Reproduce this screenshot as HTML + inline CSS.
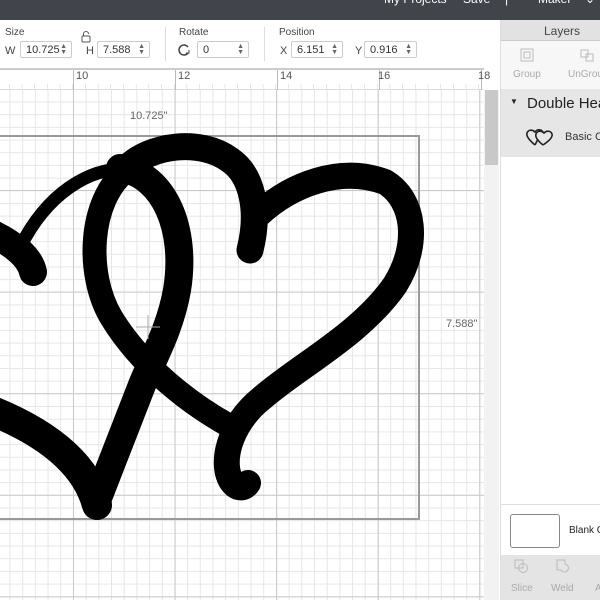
<!DOCTYPE html>
<html><head><style>
*{margin:0;padding:0;box-sizing:border-box}
body{width:600px;height:600px;overflow:hidden;position:relative;background:#fff;font-family:"Liberation Sans",sans-serif;color:#333}
.a{position:absolute}
.top{left:0;top:0;width:600px;height:20px;background:#414549;color:#fff;font-size:12px;overflow:hidden}
.tb{left:0;top:20px;width:500px;height:48px;background:#fff}
.lbl{font-size:10px;color:#444}
.box{height:17px;border:1px solid #ccc;border-radius:2px;font-size:11px;padding:2px 5px;color:#333;background:#fff}
.sp{position:absolute;right:4px;top:2px;font-size:7px;line-height:6px;color:#666}
.sep{width:1px;height:34px;background:#ddd;top:27px}
.ruler{left:0;top:68px;width:484px;height:22px;background:#fff;border-top:2px solid #ccc;border-bottom:1px solid #ddd;
 background-image:repeating-linear-gradient(90deg,transparent 0 12px,#ccc 12px 13px);background-size:12.7px 8px;background-repeat:repeat-x;background-position:9.5px 14px}
.rl{font-size:11px;color:#555;top:70px}
.canvas{left:0;top:90px;width:484px;height:510px;background-color:#fff;
 background-image:linear-gradient(90deg,#c9c9c9 1px,transparent 1px),linear-gradient(#c9c9c9 1px,transparent 1px),linear-gradient(90deg,#e6e6e6 1px,transparent 1px),linear-gradient(#e6e6e6 1px,transparent 1px);
 background-size:101.6px 101.6px,101.6px 101.6px,12.7px 12.7px,12.7px 12.7px;
 background-position:73px 100px,73px 100px,9.5px 11.5px,9.5px 11.5px}
.panel{left:500px;top:20px;width:100px;height:580px;background:#fff;border-left:1px solid #ddd;overflow:hidden}
</style></head><body>
<div class="a top"><span class="a" style="left:384px;top:-8px">My Projects</span><span class="a" style="left:463px;top:-8px">Save</span><span class="a" style="left:505px;top:-8px">|</span><span class="a" style="left:538px;top:-8px">Maker</span><span class="a" style="left:585px;top:-8px">⌄</span></div>
<div class="a tb"></div>
<div class="a lbl" style="left:5px;top:27px">Size</div>
<div class="a lbl" style="left:5px;top:45px;font-size:11px">W</div>
<div class="a box" style="left:20px;top:41px;width:52px">10.725<span class="sp">▲<br>▼</span></div>
<svg class="a" style="left:79px;top:30px" width="14" height="14"><rect x="3" y="6" width="8" height="6" rx="1" fill="none" stroke="#555"/><path d="M4.5 6V4a2.5 2.5 0 0 1 5 0" fill="none" stroke="#555"/></svg>
<div class="a lbl" style="left:86px;top:45px;font-size:11px">H</div>
<div class="a box" style="left:97px;top:41px;width:53px">7.588<span class="sp">▲<br>▼</span></div>
<div class="a sep" style="left:165px"></div>
<div class="a lbl" style="left:179px;top:27px">Rotate</div>
<svg class="a" style="left:178px;top:43px" width="14" height="14"><path d="M10 10A5 5 0 1 1 10 4" fill="none" stroke="#444" stroke-width="1.5"/><path d="M8 10h3v-3" fill="none" stroke="#444"/></svg>
<div class="a box" style="left:197px;top:41px;width:52px">0<span class="sp">▲<br>▼</span></div>
<div class="a sep" style="left:264px"></div>
<div class="a lbl" style="left:279px;top:27px">Position</div>
<div class="a lbl" style="left:280px;top:45px;font-size:11px">X</div>
<div class="a box" style="left:291px;top:41px;width:52px">6.151<span class="sp">▲<br>▼</span></div>
<div class="a lbl" style="left:355px;top:45px;font-size:11px">Y</div>
<div class="a box" style="left:364px;top:41px;width:53px">0.916<span class="sp">▲<br>▼</span></div>
<div class="a ruler"></div>
<div class="a" style="left:73px;top:70px;width:1px;height:20px;background:#bbb"></div>
<div class="a" style="left:175px;top:70px;width:1px;height:20px;background:#bbb"></div>
<div class="a" style="left:277px;top:70px;width:1px;height:20px;background:#bbb"></div>
<div class="a" style="left:379px;top:70px;width:1px;height:20px;background:#bbb"></div>
<div class="a" style="left:481px;top:70px;width:1px;height:20px;background:#bbb"></div>
<div class="a rl" style="left:76px">10</div><div class="a rl" style="left:178px">12</div><div class="a rl" style="left:280px">14</div><div class="a rl" style="left:378px">16</div><div class="a rl" style="left:478px">18</div>
<div class="a canvas"></div>
<div class="a" style="left:-2px;top:135px;width:422px;height:385px;border:2px solid #999"></div>
<div class="a" style="left:130px;top:110px;font-size:11px;color:#666">10.725"</div>
<div class="a" style="left:446px;top:318px;font-size:11px;color:#666">7.588"</div>
<svg class="a" style="left:0;top:0" width="484" height="600">
<g fill="none" stroke="#000" stroke-linecap="round">
<path d="M-5,235 C15,245 30,258 33,272" stroke-width="28"/>
<path d="M25,238 C55,185 100,165 130,170" stroke-width="13"/>
<path d="M120,168 C165,175 187,230 177,290 C170,330 152,360 142,385 L98,498" stroke-width="28"/>
<path d="M-10,410 C40,430 85,460 97,505" stroke-width="30"/>
<path d="M127,170 C88,200 86,275 111,317 C135,357 178,397 228,425" stroke-width="24"/>
<path d="M127,168 C150,145 200,138 230,160 C252,175 260,210 250,250" stroke-width="27"/>
<path d="M258,215 C290,185 340,165 385,182 C415,200 420,245 395,285 C360,335 300,365 262,398 C228,425 220,465 232,482 C238,490 245,488 248,483" stroke-width="26"/>
</g>
<path d="M136,327h24M148,315v24" stroke="#aaa" stroke-width="1"/>
</svg>
<div class="a" style="left:484px;top:90px;width:15px;height:510px;background:#f2f2f2"></div>
<div class="a" style="left:485px;top:90px;width:13px;height:75px;background:#c8c8c8"></div>
<div class="a panel">
<div class="a" style="left:0;top:0;width:100px;height:21px;background:#e2e2e2;border-bottom:1px solid #ccc;font-size:12px;color:#444;padding:4px 0 0 43px">Layers</div>
<div class="a" style="left:0;top:21px;width:100px;height:48px;background:#f7f7f7"></div>
<svg class="a" style="left:18px;top:27px" width="16" height="16"><rect x="2" y="2" width="12" height="12" fill="none" stroke="#bbb"/><rect x="5" y="5" width="6" height="6" fill="none" stroke="#bbb"/></svg>
<svg class="a" style="left:78px;top:27px" width="16" height="16"><rect x="2" y="3" width="7" height="7" fill="none" stroke="#bbb"/><rect x="7" y="7" width="7" height="7" fill="none" stroke="#bbb"/></svg>
<div class="a" style="left:12px;top:49px;font-size:10px;color:#aaa">Group</div>
<div class="a" style="left:67px;top:49px;font-size:10px;color:#aaa;white-space:nowrap">UnGroup</div>
<div class="a" style="left:0;top:69px;width:100px;height:68px;background:#e6e6e6"></div>
<div class="a" style="left:9px;top:77px;font-size:8px;color:#222">▼</div>
<div class="a" style="left:26px;top:75px;font-size:15px;color:#222;white-space:nowrap">Double Hearts</div>
<svg class="a" style="left:24px;top:106px" width="30" height="22"><g fill="none" stroke="#222" stroke-width="1.6"><path d="M10 19C4 14 1 10 2 7c1-3 5-4 8-1 2-3 6-3 8 0"/><path d="M18 19c-5-4-8-8-7-11s5-4 8-1c3-3 7-2 8 1s-3 7-9 11"/><path d="M10 19l3-6"/></g></svg>
<div class="a" style="left:64px;top:111px;font-size:11px;color:#333;white-space:nowrap">Basic Cut</div>
<div class="a" style="left:0;top:484px;width:100px;height:1px;background:#ddd"></div>
<div class="a" style="left:9px;top:494px;width:50px;height:34px;border:1px solid #888;border-radius:3px;background:#fff"></div>
<div class="a" style="left:68px;top:505px;font-size:10px;color:#222;white-space:nowrap">Blank Canvas</div>
<div class="a" style="left:0;top:535px;width:100px;height:45px;background:#e4e4e4"></div>
<svg class="a" style="left:12px;top:538px" width="16" height="16"><rect x="2" y="2" width="8" height="8" fill="none" stroke="#bbb"/><circle cx="10" cy="10" r="4.5" fill="none" stroke="#bbb"/></svg>
<svg class="a" style="left:54px;top:538px" width="16" height="16"><path d="M2 2h8v4a4 4 0 1 1-4 6H2z" fill="none" stroke="#bbb"/></svg>
<div class="a" style="left:10px;top:563px;font-size:10px;color:#aaa">Slice</div>
<div class="a" style="left:50px;top:563px;font-size:10px;color:#aaa">Weld</div>
<div class="a" style="left:94px;top:563px;font-size:10px;color:#aaa">Attach</div>
</div>
</body></html>
